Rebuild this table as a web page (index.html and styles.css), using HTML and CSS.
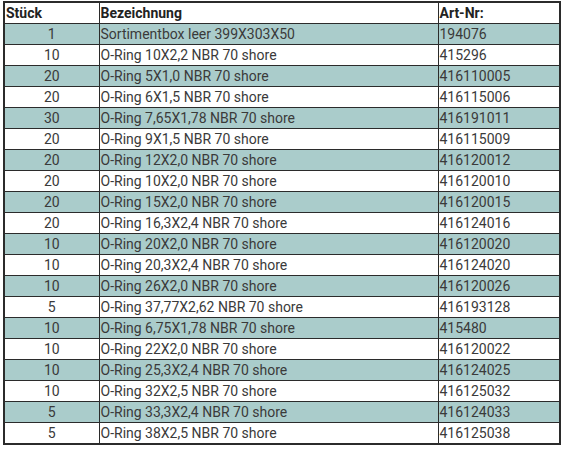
FILE: index.html
```html
<!DOCTYPE html>
<html>
<head>
<meta charset="utf-8">
<link rel="stylesheet" href="styles.css">
</head>
<body>
<table class="parts">
  <colgroup><col class="c1"><col class="c2"><col class="c3"></colgroup>
  <tr class="head"><th>Stück</th><th>Bezeichnung</th><th>Art-Nr:</th></tr>
  <tr class="alt"><td class="qty">1</td><td>Sortimentbox leer 399X303X50</td><td>194076</td></tr>
  <tr><td class="qty">10</td><td>O-Ring 10X2,2 NBR 70 shore</td><td>415296</td></tr>
  <tr class="alt"><td class="qty">20</td><td>O-Ring 5X1,0 NBR 70 shore</td><td>416110005</td></tr>
  <tr><td class="qty">20</td><td>O-Ring 6X1,5 NBR 70 shore</td><td>416115006</td></tr>
  <tr class="alt"><td class="qty">30</td><td>O-Ring 7,65X1,78 NBR 70 shore</td><td>416191011</td></tr>
  <tr><td class="qty">20</td><td>O-Ring 9X1,5 NBR 70 shore</td><td>416115009</td></tr>
  <tr class="alt"><td class="qty">20</td><td>O-Ring 12X2,0 NBR 70 shore</td><td>416120012</td></tr>
  <tr><td class="qty">20</td><td>O-Ring 10X2,0 NBR 70 shore</td><td>416120010</td></tr>
  <tr class="alt"><td class="qty">20</td><td>O-Ring 15X2,0 NBR 70 shore</td><td>416120015</td></tr>
  <tr><td class="qty">20</td><td>O-Ring 16,3X2,4 NBR 70 shore</td><td>416124016</td></tr>
  <tr class="alt"><td class="qty">10</td><td>O-Ring 20X2,0 NBR 70 shore</td><td>416120020</td></tr>
  <tr><td class="qty">10</td><td>O-Ring 20,3X2,4 NBR 70 shore</td><td>416124020</td></tr>
  <tr class="alt"><td class="qty">10</td><td>O-Ring 26X2,0 NBR 70 shore</td><td>416120026</td></tr>
  <tr><td class="qty">5</td><td>O-Ring 37,77X2,62 NBR 70 shore</td><td>416193128</td></tr>
  <tr class="alt"><td class="qty">10</td><td>O-Ring 6,75X1,78 NBR 70 shore</td><td>415480</td></tr>
  <tr><td class="qty">10</td><td>O-Ring 22X2,0 NBR 70 shore</td><td>416120022</td></tr>
  <tr class="alt"><td class="qty">10</td><td>O-Ring 25,3X2,4 NBR 70 shore</td><td>416124025</td></tr>
  <tr><td class="qty">10</td><td>O-Ring 32X2,5 NBR 70 shore</td><td>416125032</td></tr>
  <tr class="alt"><td class="qty">5</td><td>O-Ring 33,3X2,4 NBR 70 shore</td><td>416124033</td></tr>
  <tr><td class="qty">5</td><td>O-Ring 38X2,5 NBR 70 shore</td><td>416125038</td></tr>
</table>
</body>
</html>
```
FILE: styles.css
```css
html, body {
  margin: 0;
  background: #ffffff;
}
body {
  padding: 1px 3px 0 3px;
  font-family: Roboto, "Liberation Sans", sans-serif;
  font-size: 14px;
  color: #3a3a3a;
}
.parts {
  border-collapse: collapse;
  width: 556px;
  table-layout: fixed;
  border: 2px solid #2b2b2b;
}
.c1 { width: 95px; }
.c2 { width: 339px; }
.c3 { width: 122px; }
.parts th, .parts td {
  border: 1px solid #2b2b2b;
  height: 20px;
  padding: 0 1px;
  line-height: 20px;
  text-align: left;
  white-space: nowrap;
}
.parts th {
  font-weight: bold;
  color: #222222;
}
.parts td.qty {
  text-align: center;
}
.alt td {
  background: #aacccb;
}
```
